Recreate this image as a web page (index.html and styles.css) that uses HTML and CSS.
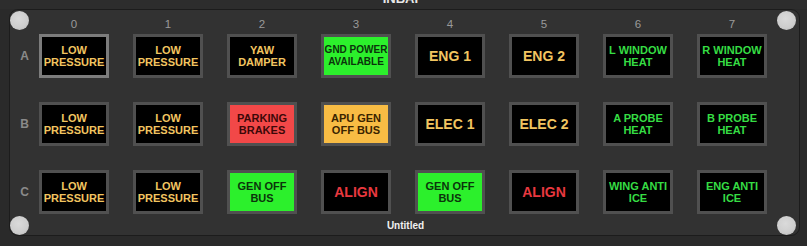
FILE: index.html
```html
<!DOCTYPE html>
<html lang="en">
  <head>
    <meta charset="UTF-8" />
    <meta name="viewport" content="width=device-width, initial-scale=1.0" />
    <title>INBAF</title>
    <link rel="stylesheet" href="styles.css">
  </head>
  <body>
    <div class="title"><span>INBAF</span></div>

    <div class="panel">
      <span class="screw screw-tl"></span>
      <span class="screw screw-tr"></span>
      <span class="screw screw-bl"></span>
      <span class="screw screw-br"></span>

      <div class="col-head">
        <span class="col-num">0</span>
        <span class="col-num">1</span>
        <span class="col-num">2</span>
        <span class="col-num">3</span>
        <span class="col-num">4</span>
        <span class="col-num">5</span>
        <span class="col-num">6</span>
        <span class="col-num">7</span>
      </div>

      <div class="rows">
        <!-- row A -->
        <div class="row">
          <span class="row-label">A</span>
          <div class="cells">
            <div class="cell amber selected">LOW<br>PRESSURE</div>
            <div class="cell amber">LOW<br>PRESSURE</div>
            <div class="cell amber">YAW<br>DAMPER</div>
            <div class="cell lit-green small">GND POWER<br>AVAILABLE</div>
            <div class="cell amber big">ENG 1</div>
            <div class="cell amber big">ENG 2</div>
            <div class="cell green">L WINDOW<br>HEAT</div>
            <div class="cell green">R WINDOW<br>HEAT</div>
          </div>
        </div>

        <!-- row B -->
        <div class="row">
          <span class="row-label">B</span>
          <div class="cells">
            <div class="cell amber">LOW<br>PRESSURE</div>
            <div class="cell amber">LOW<br>PRESSURE</div>
            <div class="cell lit-red">PARKING<br>BRAKES</div>
            <div class="cell lit-amber">APU GEN<br>OFF BUS</div>
            <div class="cell amber big">ELEC 1</div>
            <div class="cell amber big">ELEC 2</div>
            <div class="cell green">A PROBE<br>HEAT</div>
            <div class="cell green">B PROBE<br>HEAT</div>
          </div>
        </div>

        <!-- row C -->
        <div class="row">
          <span class="row-label">C</span>
          <div class="cells">
            <div class="cell amber">LOW<br>PRESSURE</div>
            <div class="cell amber">LOW<br>PRESSURE</div>
            <div class="cell lit-green">GEN OFF<br>BUS</div>
            <div class="cell red big">ALIGN</div>
            <div class="cell lit-green">GEN OFF<br>BUS</div>
            <div class="cell red big">ALIGN</div>
            <div class="cell green">WING ANTI<br>ICE</div>
            <div class="cell green">ENG ANTI<br>ICE</div>
          </div>
        </div>
      </div>

      <div class="footer">Untitled</div>
    </div>
  </body>
</html>
```

FILE: styles.css
```css
body {
  margin: 0;
  width: 807px;
  height: 246px;
  overflow: hidden;
  background: #2a2a2a;
  font-family: "Liberation Sans", Arial, sans-serif;
}

.title {
  height: 9px;
  overflow: hidden;
  text-align: center;
  color: #e8e8e8;
  font-weight: bold;
  font-size: 13px;
  line-height: 13px;
  background: #2d2d2d;
}
.title span {
  display: block;
  margin-top: -8px;
  padding-right: 2px;
}

.panel {
  position: relative;
  margin-left: 9px;
  width: 791px;
  height: 227px;
  box-sizing: border-box;
  border: 1px solid #1c1c1c;
  border-radius: 9px;
  background: #323232;
}

.screw {
  position: absolute;
  width: 19px;
  height: 19px;
  border-radius: 50%;
  background: radial-gradient(circle at 45% 40%, #dadada 0%, #cdcdcd 60%, #b0b0b0 100%);
}
.screw-tl {
  left: 0px;
  top: 1px;
}
.screw-tr {
  left: 767px;
  top: 1px;
}
.screw-bl {
  left: 0px;
  top: 206px;
}
.screw-br {
  left: 767px;
  top: 206px;
}

.col-head {
  display: flex;
  gap: 24px;
  padding: 7px 0 0 29px;
  margin-bottom: 3px;
}
.col-num {
  width: 70px;
  text-align: center;
  font-size: 11.5px;
  line-height: 14px;
  color: #9a9a9a;
}

.rows {
  display: flex;
  flex-direction: column;
  gap: 24px;
}
.row {
  display: flex;
}
.row-label {
  flex: 0 0 29px;
  text-align: center;
  line-height: 44px;
  font-size: 12px;
  font-weight: bold;
  color: #8a8a8a;
}
.cells {
  display: flex;
  gap: 24px;
}

.cell {
  width: 70px;
  height: 44px;
  box-sizing: border-box;
  border: 3px solid #505050;
  background: #000;
  display: flex;
  align-items: center;
  justify-content: center;
  text-align: center;
  font-weight: bold;
  font-size: 11px;
  line-height: 12.5px;
  white-space: nowrap;
}
.cell.selected {
  border-color: #7c7c7c;
}
.cell.big {
  font-size: 14px;
}
.cell.small {
  font-size: 10px;
  line-height: 12px;
}

.amber {
  color: #f2c560;
}
.green {
  color: #36dd44;
}
.red {
  color: #e8383f;
}
.lit-green {
  background: #2cf02c;
  color: #0b340b;
}
.lit-red {
  background: #f24848;
  color: #3c0808;
}
.lit-amber {
  background: #f8bc44;
  color: #3a2400;
}

.footer {
  margin-top: 6px;
  text-align: center;
  font-size: 10px;
  line-height: 12px;
  font-weight: bold;
  color: #f0f0f0;
  padding-left: 2px;
}
```
